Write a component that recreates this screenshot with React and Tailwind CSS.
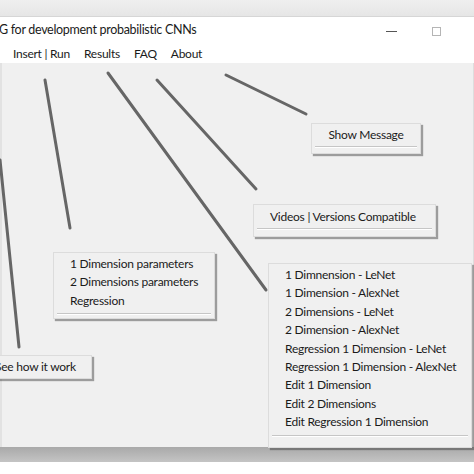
import React from 'react';

// annotation strokes, page coordinates
const ARROWS = [
    { x1: 0, y1: 160, x2: 19, y2: 347 },
    { x1: 45, y1: 80, x2: 70, y2: 228 },
    { x1: 108, y1: 73, x2: 266, y2: 290 },
    { x1: 157, y1: 80, x2: 256, y2: 189 },
    { x1: 226, y1: 75, x2: 306, y2: 114 },
];

const RESULTS = [
    '1 Dimnension - LeNet',
    '1 Dimension - AlexNet',
    '2 Dimensions - LeNet',
    '2 Dimension - AlexNet',
    'Regression 1 Dimension - LeNet',
    'Regression 1 Dimension - AlexNet',
    'Edit 1 Dimension',
    'Edit 2 Dimensions',
    'Edit Regression 1 Dimension',
];

const Separator = () => (
    <div className="mx-[3px] border-t border-[#c6c6c6] border-b border-b-white" />
);

const MenuItem = ({ children }) => (
    <div className="h-[18.4px] leading-[18.4px] pl-[16px] pr-4 whitespace-nowrap">{children}</div>
);

const App = () => {
    return (
        <div
            className="relative w-[474px] h-[474px] overflow-hidden flex flex-col bg-white text-[#1b1b1b] text-[12px] tracking-[-0.25px]"
            style={{ fontFamily: 'Lato, "Noto Sans", sans-serif' }}
        >
            {/* window chrome above */}
            <div className="h-[17px] bg-gradient-to-b from-[#efefef] to-[#e6e6e6] border-b border-[#d6d6d6]" />

            {/* title bar */}
            <div className="h-[27px] bg-white flex items-center relative">
                <span className="-ml-[1px] text-[12.5px] tracking-[-0.3px] whitespace-nowrap">G for development probabilistic CNNs</span>
                <div className="absolute left-[386px] top-[14px] w-[11px] h-[1px] bg-[#555]" />
                <div className="absolute left-[432px] top-[10px] w-[9px] h-[9px] border border-[#b5b5b5]" />
            </div>

            {/* menu bar */}
            <div className="h-[19px] bg-white flex items-center pl-[13px] gap-[14px] whitespace-nowrap">
                <span>Insert | Run</span>
                <span>Results</span>
                <span>FAQ</span>
                <span>About</span>
            </div>

            {/* client area */}
            <div className="relative flex-1 bg-[#f0f0f0] border-l-[2px] border-l-[#e2e2e2] border-r border-r-[#dedede]">
                <div className="absolute left-[309px] top-[60px] w-[110px] h-[31px] bg-[#f0f0f0] border border-[#dcdcdc] shadow-[2px_2px_1px_rgba(0,0,0,0.35)] flex flex-col">
                    <div className="h-[22px] leading-[22px] text-center">Show Message</div>
                    <Separator />
                </div>

                <div className="absolute left-[251px] top-[141px] w-[183px] h-[33px] bg-[#f0f0f0] border border-[#dcdcdc] shadow-[2px_2px_1px_rgba(0,0,0,0.35)] flex flex-col">
                    <div className="h-[23px] leading-[23px] pl-[16px] whitespace-nowrap">Videos | Versions Compatible</div>
                    <Separator />
                </div>

                <div className="absolute left-[51px] top-[189px] w-[162px] h-[67px] bg-[#f0f0f0] border border-[#dcdcdc] shadow-[2px_2px_1px_rgba(0,0,0,0.35)] flex flex-col pt-[2px]">
                    <MenuItem>1 Dimension parameters</MenuItem>
                    <MenuItem>2 Dimensions parameters</MenuItem>
                    <MenuItem>Regression</MenuItem>
                    <div className="mt-[3px]">
                        <Separator />
                    </div>
                </div>

                <div className="absolute -left-[10px] top-[292px] w-[100px] h-[24px] bg-[#f0f0f0] border border-[#dcdcdc] shadow-[2px_2px_1px_rgba(0,0,0,0.35)] flex items-center pl-[2px] whitespace-nowrap">
                    See how it work
                </div>

                <div className="absolute left-[266px] top-[200px] w-[204px] h-[185px] bg-[#f0f0f0] border border-[#dcdcdc] shadow-[2px_2px_1px_rgba(0,0,0,0.3)] flex flex-col pt-[2px]">
                    {RESULTS.map((item) => (
                        <MenuItem key={item}>{item}</MenuItem>
                    ))}
                    <div className="mt-[3px]">
                        <Separator />
                    </div>
                </div>
            </div>

            {/* drop shadow under the window */}
            <div className="h-[15px] bg-gradient-to-b from-[#a9a9a9] to-[#c4c4c4]" />
            <div className="h-[12px] bg-white" />

            <svg className="absolute inset-0 pointer-events-none" width="474" height="474">
                {ARROWS.map((a, i) => (
                    <line
                        key={i}
                        x1={a.x1}
                        y1={a.y1}
                        x2={a.x2}
                        y2={a.y2}
                        stroke="#666"
                        strokeWidth="3"
                        strokeLinecap="round"
                    />
                ))}
            </svg>
        </div>
    );
};

export default App;
